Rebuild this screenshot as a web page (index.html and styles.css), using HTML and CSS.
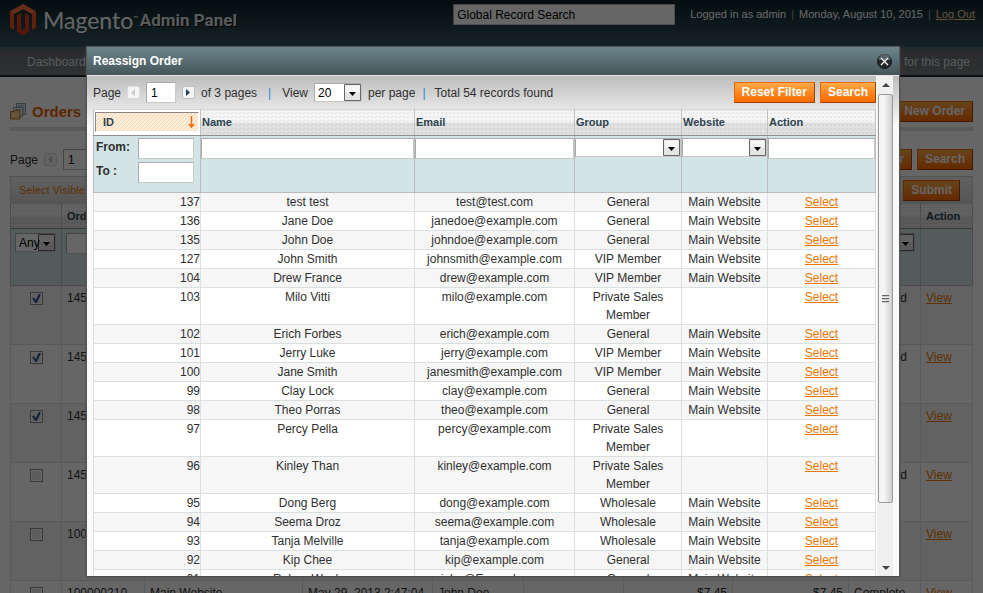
FILE: index.html
```
<!DOCTYPE html>
<html lang="en">
<head>
    <meta charset="UTF-8">
    <meta name="viewport" content="width=device-width, initial-scale=1.0">
    <title>Orders / Magento Admin</title>
    <link rel="stylesheet" href="styles.css">
</head>
<body>
    <div class="wrapper">
        <header class="header">
            <div class="logo">
                <svg width="28" height="32" viewBox="0 0 28 32">
                    <path d="M14 0 27 7.500V23.500L23 26V10L14 5 5 10V26L1 23.500V7.500Z" fill="#f2501c"/>
                    <path d="M8 11 12 9V25L14 26.500 16 25V9L20 11V27.500L14 31.500 8 27.500Z" fill="#d8391a"/>
                    <path d="M14 0 27 7.500 23 10 14 5 5 10 1 7.500Z" fill="#ff7038"/>
                </svg>
                <span class="logo-name">Magento<sup>™</sup></span>
                <span class="logo-title">Admin Panel</span>
            </div>
            <div class="header-right">
                <input type="text" class="global-search" value="Global Record Search" aria-label="Global Record Search">
                <p class="super">Logged in as admin<span class="separator">|</span>Monday, August 10, 2015<span class="separator">|</span><a href="#">Log Out</a></p>
            </div>
        </header>
        <nav class="nav-bar">
            <a href="#">Dashboard</a>
            <a href="#">Get help for this page</a>
        </nav>

        <main class="middle">
            <div class="content-header">
                <h3>
                    <svg width="17" height="17" viewBox="0 0 17 17">
                        <path d="M6.500 .5h9v11h-9z" fill="#d9e6ee" stroke="#7d98aa"/>
                        <path d="M8 3h6M8 5h6M8 7h6M8 9h6" stroke="#8fa9ba"/>
                        <path d="M3.500 4.500h9v9h-9z" fill="#edf3f6" stroke="#8398a5"/>
                        <path d="M5 6.500h6" stroke="#8fa9ba"/>
                        <path d="M.5 8.500h4l1-1h4.500v8.500H.5z" fill="#f8c878" stroke="#b9772c"/>
                        <path d="M2 11h7M2 13h7" stroke="#ffe9b8"/>
                    </svg>
                    Orders
                </h3>
                <button class="btn">Create New Order</button>
            </div>
            <div class="actions page-actions">
                <div class="pager">
                    <label for="orders-page">Page</label>
                    <button class="arrow off" aria-label="Previous page"><svg width="5" height="7"><path d="M4 0v7L0 3.500z" fill="#bbb"/></svg></button>
                    <input type="text" class="page-input" id="orders-page" value="1">
                </div>
                <div class="filter-actions">
                    <button class="btn">Reset Filter</button>
                    <button class="btn">Search</button>
                </div>
            </div>
            <div class="massaction">
                <a href="#">Select Visible</a>
                <button class="btn">Submit</button>
            </div>
            <table class="orders">
                <colgroup>
                    <col class="w-check"><col class="w-order"><col><col class="w-date"><col class="w-bill"><col class="w-ship"><col class="w-base"><col class="w-total"><col class="w-status"><col class="w-view">
                </colgroup>
                <thead>
                    <tr class="headings"><th></th><th>Order #</th><th></th><th></th><th></th><th></th><th></th><th></th><th></th><th>Action</th></tr>
                    <tr class="filter">
                        <td><select aria-label="Selection"><option>Any</option></select></td>
                        <td><input type="text" aria-label="Order number"></td>
                        <td></td><td></td><td></td><td></td><td></td><td></td>
                        <td><select aria-label="Status"><option></option></select></td>
                        <td></td>
                    </tr>
                </thead>
                <tbody>
                    <tr><td><input type="checkbox" aria-label="Select order" checked></td><td>145000013</td><td></td><td></td><td></td><td></td><td></td><td></td><td class="end">Closed</td><td><a href="#">View</a></td></tr>
                    <tr><td><input type="checkbox" aria-label="Select order" checked></td><td>145000012</td><td></td><td></td><td></td><td></td><td></td><td></td><td class="end">Closed</td><td><a href="#">View</a></td></tr>
                    <tr><td><input type="checkbox" aria-label="Select order" checked></td><td>145000011</td><td></td><td></td><td></td><td></td><td></td><td></td><td></td><td><a href="#">View</a></td></tr>
                    <tr><td><input type="checkbox" aria-label="Select order"></td><td>145000010</td><td></td><td></td><td></td><td></td><td></td><td></td><td class="end">Closed</td><td><a href="#">View</a></td></tr>
                    <tr><td><input type="checkbox" aria-label="Select order"></td><td>100000211</td><td></td><td></td><td></td><td></td><td></td><td></td><td></td><td><a href="#">View</a></td></tr>
                    <tr><td><input type="checkbox" aria-label="Select order"></td><td>100000210</td><td>Main Website</td><td>May 29, 2013 2:47:04</td><td>John Doe</td><td></td><td class="price">$7.45</td><td class="price">$7.45</td><td>Complete</td><td><a href="#">View</a></td></tr>
                </tbody>
            </table>
        </main>
    </div>

    <div class="overlay">
        <div class="dialog" role="dialog" aria-labelledby="dialog-title">
            <div class="dialog-head">
                <h2 id="dialog-title">Reassign Order</h2>
                <button class="close" aria-label="Close">
                    <svg width="15" height="15" viewBox="0 0 15 15">
                        <circle cx="7.500" cy="7.500" r="7" fill="#22282b" stroke="#15191b"/>
                        <path d="M1.500 6a6 6 0 0 1 12 0z" fill="#596268"/>
                        <path d="M4 4l7 7M11 4l-7 7" stroke="#fff" stroke-width="1.200"/>
                    </svg>
                </button>
            </div>
            <div class="dialog-body">
                <div class="dialog-content">
                    <div class="actions">
                        <div class="pager">
                            <label for="customer-page">Page</label>
                            <button class="arrow off" aria-label="Previous page"><svg width="5" height="7"><path d="M4 0v7L0 3.500z" fill="#ccc"/></svg></button>
                            <input type="text" class="page-input" id="customer-page" value="1">
                            <button class="arrow" aria-label="Next page"><svg width="5" height="7"><path d="M0 0v7l4-3.500z" fill="#1f3f4f"/></svg></button>
                            <span>of 3 pages</span>
                            <span class="bar">|</span>
                            <label for="limit">View</label>
                            <select id="limit" class="limit"><option>20</option></select>
                            <span>per page</span>
                            <span class="bar tight">|</span>
                            <span>Total 54 records found</span>
                        </div>
                        <div class="filter-actions">
                            <button class="btn">Reset Filter</button>
                            <button class="btn">Search</button>
                        </div>
                    </div>
                    <table class="grid">
                        <colgroup>
                            <col class="c-id"><col><col class="c-email"><col class="c-group"><col class="c-site"><col class="c-action">
                        </colgroup>
                        <thead>
                            <tr class="headings">
                                <th class="sorted"><a href="#">ID<svg width="7" height="12" viewBox="0 0 7 12"><path d="M3.500 0v11M1 8l2.500 3L6 8" fill="none" stroke="#f26b0c" stroke-width="1.500"/></svg></a></th>
                                <th>Name</th>
                                <th>Email</th>
                                <th>Group</th>
                                <th>Website</th>
                                <th>Action</th>
                            </tr>
                            <tr class="filter">
                                <td class="range">
                                    <div><label for="id-from">From:</label><input type="text" id="id-from"></div>
                                    <div><label for="id-to">To :</label><input type="text" id="id-to"></div>
                                </td>
                                <td><input type="text" aria-label="Name"></td>
                                <td><input type="text" aria-label="Email"></td>
                                <td><select aria-label="Group"><option></option></select></td>
                                <td><select aria-label="Website"><option></option></select></td>
                                <td><input type="text" aria-label="Action"></td>
                            </tr>
                        </thead>
                        <tbody>
                            <tr><td>137</td><td>test test</td><td>test@test.com</td><td>General</td><td>Main Website</td><td><a href="#">Select</a></td></tr>
                            <tr><td>136</td><td>Jane Doe</td><td>janedoe@example.com</td><td>General</td><td>Main Website</td><td><a href="#">Select</a></td></tr>
                            <tr><td>135</td><td>John Doe</td><td>johndoe@example.com</td><td>General</td><td>Main Website</td><td><a href="#">Select</a></td></tr>
                            <tr><td>127</td><td>John Smith</td><td>johnsmith@example.com</td><td>VIP Member</td><td>Main Website</td><td><a href="#">Select</a></td></tr>
                            <tr><td>104</td><td>Drew France</td><td>drew@example.com</td><td>VIP Member</td><td>Main Website</td><td><a href="#">Select</a></td></tr>
                            <tr><td>103</td><td>Milo Vitti</td><td>milo@example.com</td><td>Private Sales Member</td><td></td><td><a href="#">Select</a></td></tr>
                            <tr><td>102</td><td>Erich Forbes</td><td>erich@example.com</td><td>General</td><td>Main Website</td><td><a href="#">Select</a></td></tr>
                            <tr><td>101</td><td>Jerry Luke</td><td>jerry@example.com</td><td>VIP Member</td><td>Main Website</td><td><a href="#">Select</a></td></tr>
                            <tr><td>100</td><td>Jane Smith</td><td>janesmith@example.com</td><td>VIP Member</td><td>Main Website</td><td><a href="#">Select</a></td></tr>
                            <tr><td>99</td><td>Clay Lock</td><td>clay@example.com</td><td>General</td><td>Main Website</td><td><a href="#">Select</a></td></tr>
                            <tr><td>98</td><td>Theo Porras</td><td>theo@example.com</td><td>General</td><td>Main Website</td><td><a href="#">Select</a></td></tr>
                            <tr><td>97</td><td>Percy Pella</td><td>percy@example.com</td><td>Private Sales Member</td><td></td><td><a href="#">Select</a></td></tr>
                            <tr><td>96</td><td>Kinley Than</td><td>kinley@example.com</td><td>Private Sales Member</td><td></td><td><a href="#">Select</a></td></tr>
                            <tr><td>95</td><td>Dong Berg</td><td>dong@example.com</td><td>Wholesale</td><td>Main Website</td><td><a href="#">Select</a></td></tr>
                            <tr><td>94</td><td>Seema Droz</td><td>seema@example.com</td><td>Wholesale</td><td>Main Website</td><td><a href="#">Select</a></td></tr>
                            <tr><td>93</td><td>Tanja Melville</td><td>tanja@example.com</td><td>Wholesale</td><td>Main Website</td><td><a href="#">Select</a></td></tr>
                            <tr><td>92</td><td>Kip Chee</td><td>kip@example.com</td><td>General</td><td>Main Website</td><td><a href="#">Select</a></td></tr>
                            <tr><td>91</td><td>Rohan Wesh</td><td>john@Example.com</td><td>General</td><td>Main Website</td><td><a href="#">Select</a></td></tr>
                        </tbody>
                    </table>
                </div>
                <div class="scrollbar">
                    <svg width="15" height="18"><path d="M4 11h8l-4-4z" fill="#444"/></svg>
                    <div class="track">
                        <div class="thumb"><span></span><span></span><span></span></div>
                    </div>
                    <svg width="15" height="17"><path d="M4 7h8l-4 4z" fill="#444"/></svg>
                </div>
            </div>
        </div>
    </div>
</body>
</html>
```
FILE: styles.css
```
* {
    box-sizing: border-box;
}
html, body {
    height: 100%;
    overflow: hidden;
}
body {
    margin: 0;
    background: #fff;
    color: #2f2f2f;
    font: 12px/18px "Liberation Sans", Arial, sans-serif;
}
.wrapper {
    height: 100%;
    overflow: hidden;
}
h2, h3, p {
    margin: 0;
}
a {
    color: #ea7601;
}
input, select, button {
    font: inherit;
    margin: 0;
}
input[type="text"], select {
    height: 21px;
    padding: 0 3px;
    border: 1px solid;
    border-color: #aaa #c8c8c8 #c8c8c8 #aaa;
    border-radius: 0;
    background-color: #fff;
    color: #000;
}
select {
    height: 19px;
    appearance: none;
    background: #fff url("data:image/svg+xml,%3Csvg xmlns='http://www.w3.org/2000/svg' width='17' height='17'%3E%3Cpath d='M.5.5h16v16H.5z' fill='%23e4e4e4' stroke='%23666'/%3E%3Cpath d='M1.500 1.500h14v7h-14z' fill='%23f6f6f6'/%3E%3Cpath d='M5 8h7l-3.500 4z' fill='%23000'/%3E%3C/svg%3E") no-repeat right center;
}

/* buttons */
.btn {
    height: 21px;
    padding: 0 7px 1px;
    border: 1px solid;
    border-color: #ed6502 #a04300 #a04300 #ed6502;
    background: linear-gradient(#ffac47, #ff8a24 45%, #fd6a00);
    color: #fff;
    font-weight: bold;
    line-height: 18px;
    white-space: nowrap;
    cursor: pointer;
}
.arrow {
    display: flex;
    align-items: center;
    justify-content: center;
    width: 13px;
    height: 13px;
    padding: 0;
    border: 1px solid #b8c0c4;
    border-radius: 2px;
    background: #f4f4f4;
}
.arrow.off {
    border-color: #ddd;
}

/* page header */
.header {
    display: flex;
    justify-content: space-between;
    align-items: flex-start;
    height: 47px;
    padding: 4px 8px 0 9px;
    background: linear-gradient(#0c242b, #3a5762);
}
.logo {
    display: flex;
    align-items: center;
    height: 32px;
    color: #fff;
    white-space: nowrap;
}
.logo-name {
    margin-left: 6px;
    font-family: Lato, sans-serif;
    font-size: 23px;
}
.logo-name sup {
    font-size: 6px;
    line-height: 0;
}
.logo-title {
    margin-left: 2px;
    font-family: Roboto, sans-serif;
    font-size: 17px;
    font-weight: bold;
    color: #dce2e4;
    text-shadow: 1px 1px 1px #000;
}
.header-right {
    display: flex;
    align-items: flex-start;
    gap: 15px;
    font-size: 11px;
}
.header .global-search {
    width: 222px;
    font-size: 12px;
}
.super {
    line-height: 21px;
    color: #fff;
    white-space: nowrap;
}
.super .separator {
    margin: 0 5px;
    color: #99a4a8;
}
.super a {
    color: #f8c98a;
}
.nav-bar {
    display: flex;
    justify-content: space-between;
    align-items: center;
    height: 30px;
    padding: 0 13px 0 27px;
    border-top: 2px solid #4d6d7a;
    border-bottom: 2px solid #1b2529;
    background: linear-gradient(#64696c, #787c7f);
}
.nav-bar a {
    color: #dee4e6;
    text-decoration: none;
}

/* orders page */
.middle {
    padding: 23px 10px 0;
}
.content-header {
    display: flex;
    justify-content: space-between;
    align-items: center;
    height: 31px;
    padding-bottom: 4px;
    border-bottom: 4px solid #dfdfdf;
}
.content-header h3 {
    display: flex;
    align-items: center;
    gap: 5px;
    font-size: 15px;
    color: #eb5e00;
}
.actions {
    display: flex;
    justify-content: space-between;
    align-items: center;
}
.page-actions {
    height: 21px;
    margin: 18px 0 6px;
}
.pager {
    display: flex;
    align-items: center;
    gap: 6px;
}
.pager .page-input {
    width: 30px;
    padding: 0 4px;
}
.bar {
    margin: 0 5px;
    color: #1f8ad8;
}
.bar.tight {
    margin: 0 3px 0 1px;
}
.limit {
    width: 48px;
}
.filter-actions {
    display: flex;
    gap: 5px;
}
.massaction {
    display: flex;
    justify-content: space-between;
    align-items: center;
    height: 27px;
    padding: 0 12px 0 8px;
    border: 1px solid #d1cfcf;
    border-bottom: 0;
    background: linear-gradient(#f2f2f2, #d6d6d6);
}
.massaction a {
    font-size: 11px;
    text-decoration: none;
}

/* tables */
table {
    width: 100%;
    table-layout: fixed;
    border-collapse: collapse;
}
td, th {
    padding: 0;
    vertical-align: top;
}
.headings th {
    height: 26px;
    padding-left: 1px;
    border: 1px solid;
    border-color: #d0d8d8 #c0c0c0 #8c9192;
    background: url("data:image/svg+xml,%3Csvg xmlns='http://www.w3.org/2000/svg' width='4' height='4'%3E%3Cpath d='M3 0h1v1h-1zM2 1h1v1h-1zM1 2h1v1h-1zM0 3h1v1h-1z' fill='%23000' fill-opacity='.09'/%3E%3C/svg%3E"), linear-gradient(#f5f5f5 50%, #e0e0e0 50%);
    color: #2d444f;
    font-size: 11px;
    line-height: 24px;
    text-align: left;
}
.filter td {
    border: 1px solid #bcbcbc;
    background: repeating-linear-gradient(#d0e2e6 0 1px, transparent 1px 2px), repeating-linear-gradient(90deg, #d0e2e6 0 1px, #dae7e8 1px 2px);
}
.filter input, .filter select {
    display: block;
    width: 100%;
}
.orders .headings th {
    height: 25px;
    padding-left: 5px;
}
.orders .filter td {
    height: 57px;
    padding: 4px 5px 0 4px;
}
.orders tbody td {
    height: 59px;
    padding: 3px 5px 0 5px;
    border: 1px solid #dadfe0;
}
.orders tbody tr:nth-child(odd) {
    background: #f6f6f6;
}
.orders input[type="checkbox"] {
    appearance: none;
    display: block;
    width: 13px;
    height: 13px;
    margin: 3px auto 0;
    border: 1px solid #8e8f8f;
    background: #e8e8e8;
    box-shadow: inset 0 0 0 1px #fff;
}
.orders input[type="checkbox"]:checked {
    background: url("data:image/svg+xml,%3Csvg xmlns='http://www.w3.org/2000/svg' width='11' height='11'%3E%3Cpath d='M2 5l3 4 4-8' fill='none' stroke='%232b4f9e' stroke-width='2'/%3E%3C/svg%3E") center no-repeat #eee;
}
.orders tbody .end, .orders tbody .price {
    text-align: right;
}
.orders tbody .end {
    padding-right: 13px;
}
.w-check { width: 51px; }
.w-order { width: 83px; }
.w-date { width: 130px; }
.w-bill { width: 91px; }
.w-ship { width: 100px; }
.w-base { width: 109px; }
.w-total { width: 116px; }
.w-status { width: 72px; }
.w-view { width: 52px; }

/* dialog */
.overlay {
    position: fixed;
    inset: 0;
    display: flex;
    padding: 46px 83px 17px 86px;
    background: rgba(0, 0, 0, .6);
}
.dialog {
    flex: 1;
    display: flex;
    flex-direction: column;
    min-width: 0;
    border: 1px solid #555;
    border-bottom-width: 0;
    background: #fafafa;
    box-shadow: 0 1px 2px #444;
}
.dialog-head {
    display: flex;
    justify-content: space-between;
    align-items: center;
    height: 29px;
    padding: 0 7px 0 6px;
    border-bottom: 1px solid #e8eaea;
    background: linear-gradient(#6c868e, #445558);
}
.dialog-head h2 {
    font-size: 12px;
    line-height: 18px;
    color: #fff;
}
.close {
    display: flex;
    padding: 0;
    border: 0;
    background: none;
}
.dialog-body {
    flex: 1;
    display: flex;
    min-height: 0;
    padding: 0 6px;
    background: linear-gradient(#bdbdbd, #fafafa 50px);
}
.dialog-content {
    flex: 1;
    min-width: 0;
    overflow: hidden;
}
.dialog .actions {
    height: 33px;
}
.grid tbody {
    background: #fff;
}
.grid tbody tr:nth-child(odd) {
    background: #f6f6f6;
}
.grid tbody td {
    height: 19px;
    border: 1px solid #dadfe0;
    text-align: center;
}
.grid tbody td:first-child {
    text-align: right;
}
.grid .filter td {
    height: 57px;
    padding-top: 2px;
}
.grid .headings .sorted {
    padding: 2px 1px;
    background: #fff;
}
.sorted a {
    display: flex;
    justify-content: space-between;
    align-items: center;
    height: 20px;
    padding: 0 3px 0 7px;
    border: 1px solid;
    border-color: #8c8484 #fff #fff #8c8484;
    background: url("data:image/svg+xml,%3Csvg xmlns='http://www.w3.org/2000/svg' width='4' height='4'%3E%3Cpath d='M3 0h1v1h-1zM2 1h1v1h-1zM1 2h1v1h-1zM0 3h1v1h-1z' fill='%23fad0a6'/%3E%3C/svg%3E") #fdeedd;
    color: #2d444f;
    text-decoration: none;
}
.range div {
    display: flex;
    justify-content: space-between;
    padding: 0 6px 3px 2px;
}
.range label {
    font-weight: bold;
}
.range input {
    width: 56px;
}
.c-id { width: 107px; }
.c-email { width: 160px; }
.c-group { width: 107px; }
.c-site { width: 86px; }
.c-action { width: 108px; }

/* scrollbar */
.scrollbar {
    display: flex;
    flex-direction: column;
    width: 17px;
    padding-left: 1px;
    border-left: 1px solid #fff;
    background: #f0f0f0;
}
.track {
    flex: 1;
}
.thumb {
    display: flex;
    flex-direction: column;
    align-items: center;
    justify-content: center;
    gap: 1px;
    height: 88%;
    border: 1px solid #999;
    border-radius: 2px;
    background: linear-gradient(90deg, #f5f5f5 40%, #cfcfcf);
}
.thumb span {
    width: 7px;
    height: 2px;
    background: #666;
    border-bottom: 1px solid #ccc;
}
```
